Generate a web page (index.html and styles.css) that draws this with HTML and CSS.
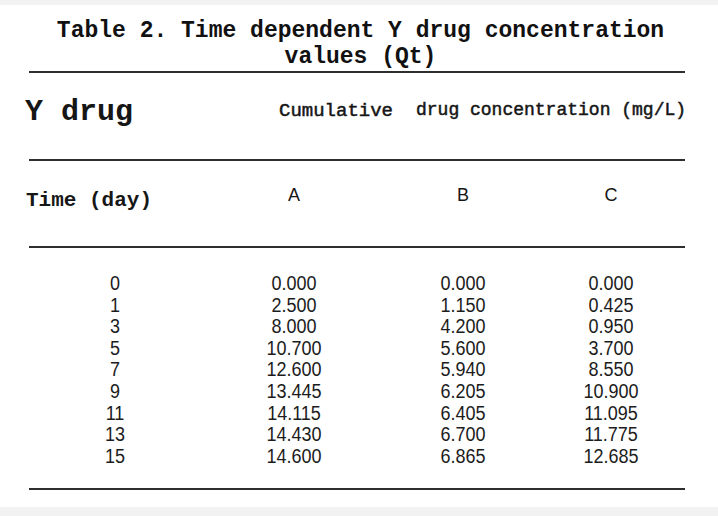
FILE: index.html
```html
<!DOCTYPE html>
<html lang="en">
<head>
<meta charset="utf-8">
<title>Table 2</title>
<link rel="stylesheet" href="styles.css">
</head>
<body>
<div class="sheet">
  <h1 class="title">Table 2. Time dependent Y drug concentration<br>values (Qt)</h1>
  <div class="rule"></div>
  <div class="head1">
    <div class="ydrug">Y drug</div>
    <div class="cumul">Cumulative</div>
    <div class="conc">drug concentration (mg/L)</div>
  </div>
  <div class="rule"></div>
  <div class="head2 grid">
    <div class="timecol">Time (day)</div>
    <div class="letter">A</div>
    <div class="letter">B</div>
    <div class="letter">C</div>
  </div>
  <div class="rule"></div>
  <div class="data grid">
    <div>0</div><div>0.000</div><div>0.000</div><div>0.000</div>
    <div>1</div><div>2.500</div><div>1.150</div><div>0.425</div>
    <div>3</div><div>8.000</div><div>4.200</div><div>0.950</div>
    <div>5</div><div>10.700</div><div>5.600</div><div>3.700</div>
    <div>7</div><div>12.600</div><div>5.940</div><div>8.550</div>
    <div>9</div><div>13.445</div><div>6.205</div><div>10.900</div>
    <div>11</div><div>14.115</div><div>6.405</div><div>11.095</div>
    <div>13</div><div>14.430</div><div>6.700</div><div>11.775</div>
    <div>15</div><div>14.600</div><div>6.865</div><div>12.685</div>
  </div>
  <div class="rule"></div>
</div>
</body>
</html>
```

FILE: styles.css
```css
html, body {
  margin: 0;
  padding: 0;
  background: #f2f2f2;
}

.sheet {
  margin-top: 5px;
  height: 502px;
  background: #ffffff;
  color: #161616;
  overflow: hidden;
}

.title {
  margin: 0;
  padding-top: 13px;
  font-family: "Liberation Mono", "Courier New", monospace;
  font-weight: bold;
  font-size: 23px;
  line-height: 26px;
  text-align: center;
  padding-left: 3px;
  color: #111;
}

.rule {
  height: 2px;
  background: #2e2e2e;
  margin: 0 33px 0 29px;
}

.title + .rule {
  margin-top: 1px;
}

.head1 {
  height: 86px;
  display: flex;
  align-items: flex-start;
  padding-left: 25px;
  font-family: "Liberation Mono", "Courier New", monospace;
  font-weight: bold;
}

.ydrug {
  width: 254px;
  font-size: 30px;
  line-height: 30px;
  margin-top: 24px;
}

.cumul {
  width: 137px;
  font-size: 19px;
  line-height: 19px;
  margin-top: 29px;
  font-weight: normal;
  -webkit-text-stroke: 0.5px #161616;
}

.conc {
  font-size: 18px;
  line-height: 18px;
  margin-top: 28px;
  white-space: nowrap;
  font-weight: normal;
  -webkit-text-stroke: 0.5px #161616;
}

.grid {
  display: grid;
  grid-template-columns: 230px 128px 210px 86px;
}

.head2 {
  height: 85px;
  align-items: start;
}

.timecol {
  font-family: "Liberation Mono", "Courier New", monospace;
  font-weight: bold;
  font-size: 21px;
  line-height: 21px;
  margin-top: 29px;
  padding-left: 26px;
  white-space: nowrap;
}

.letter {
  font-family: "Liberation Sans", Arial, sans-serif;
  font-size: 18px;
  line-height: 18px;
  margin-top: 25px;
  text-align: center;
}

.data {
  padding-top: 26px;
  padding-bottom: 20px;
  font-family: "Liberation Sans", Arial, sans-serif;
  font-size: 18px;
  line-height: 21.6px;
  color: #1c1c1c;
}

.data > div {
  text-align: center;
  transform: scaleY(1.08);
}
```
